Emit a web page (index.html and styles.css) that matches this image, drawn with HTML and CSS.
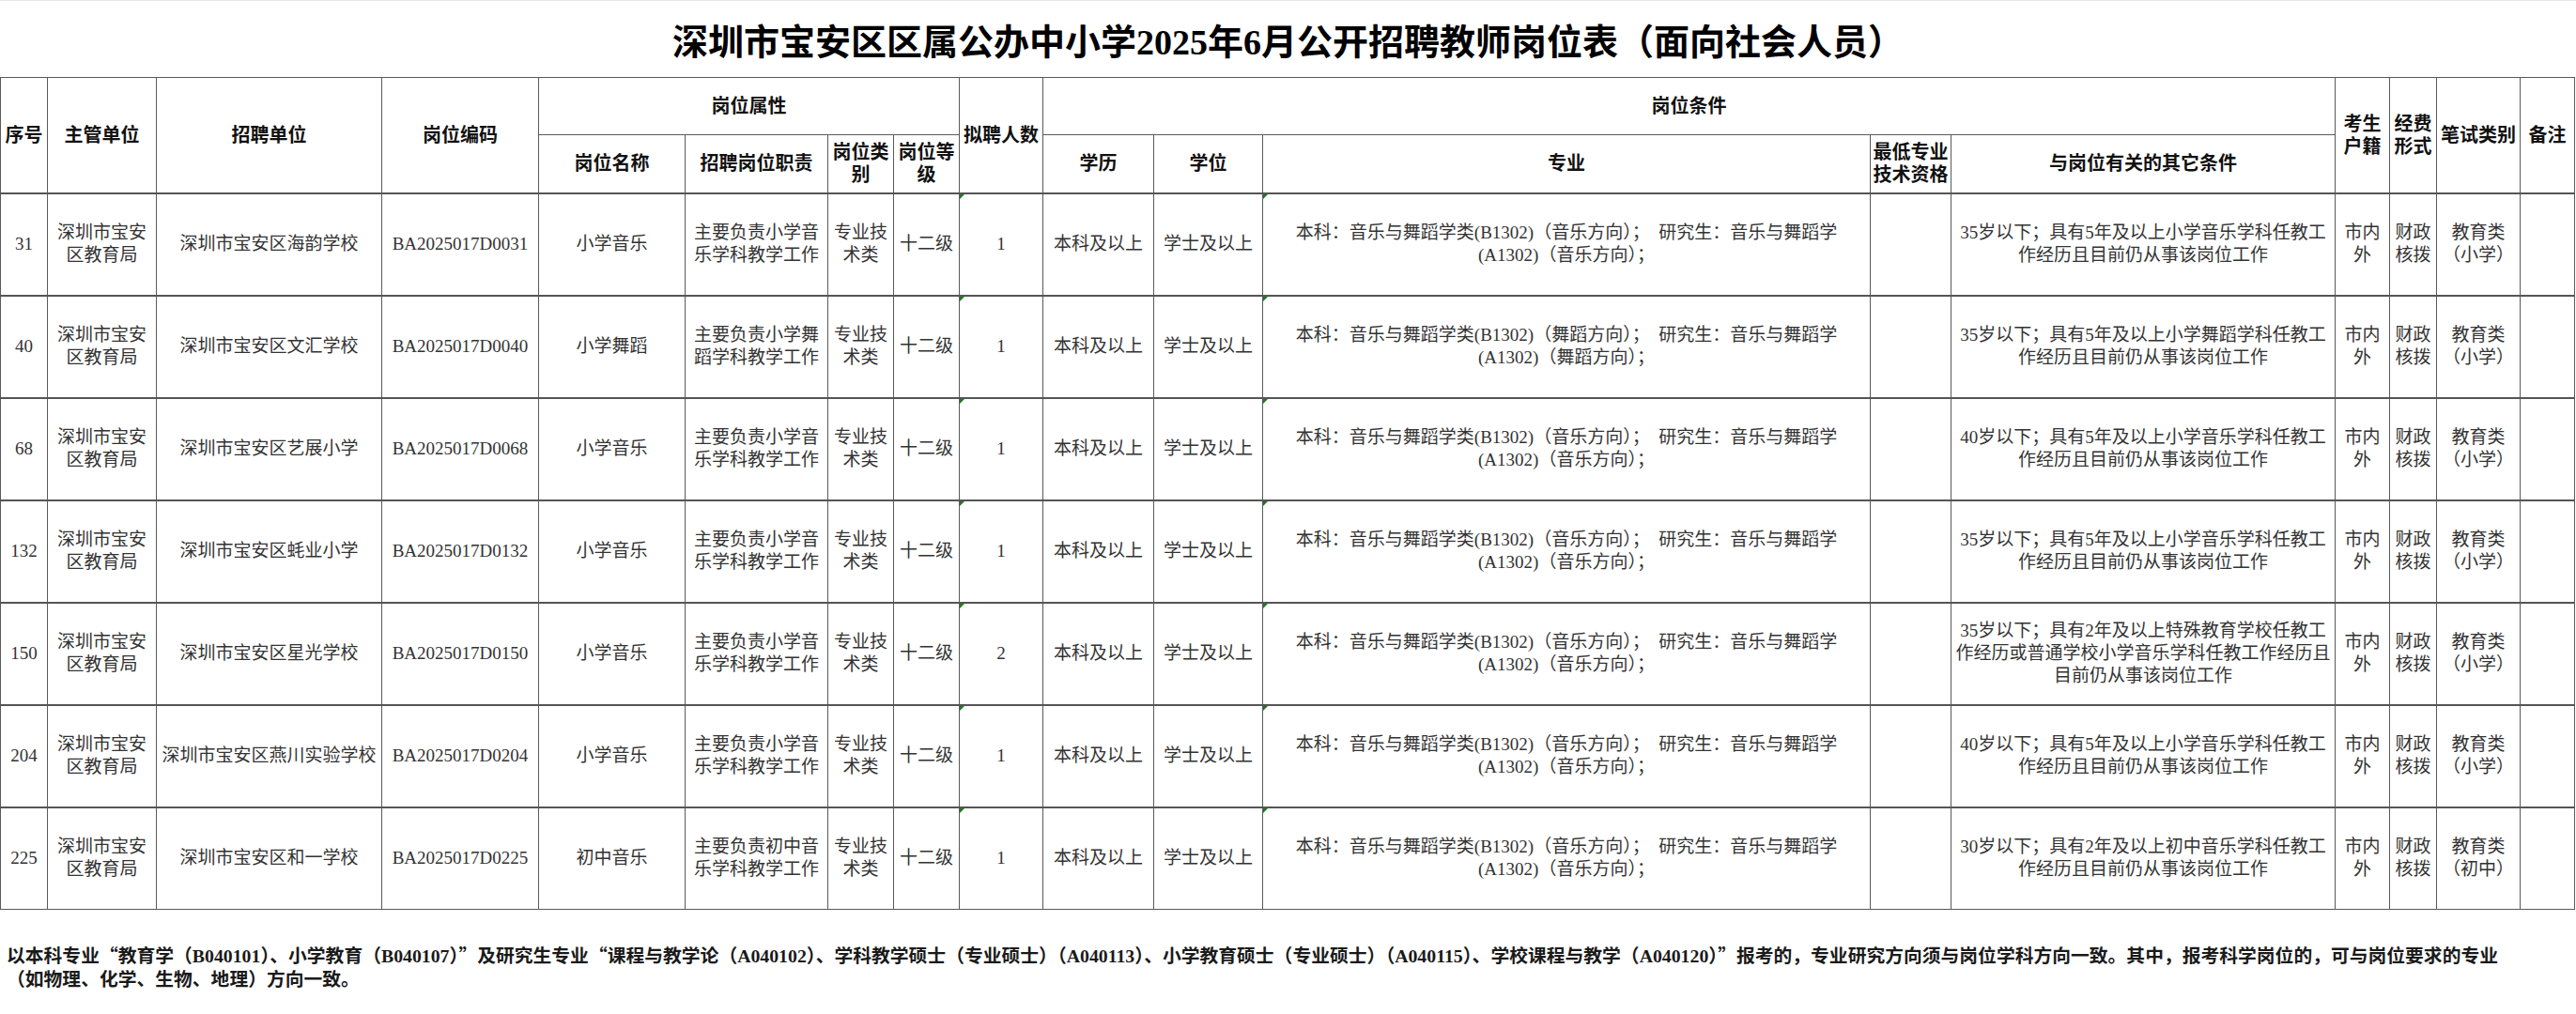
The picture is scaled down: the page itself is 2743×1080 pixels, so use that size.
FILE: index.html
```html
<!DOCTYPE html>
<html lang="zh-CN">
<head>
<meta charset="utf-8">
<title>深圳市宝安区区属公办中小学2025年6月公开招聘教师岗位表（面向社会人员）</title>
<link rel="stylesheet" href="styles.css">
</head>
<body>
<div class="page">
  <h1 class="title">深圳市宝安区区属公办中小学2025年6月公开招聘教师岗位表（面向社会人员）</h1>
  <table class="sheet">
    <colgroup>
      <col style="width:50px"><col style="width:116px"><col style="width:240px"><col style="width:167px">
      <col style="width:156px"><col style="width:152px"><col style="width:70px"><col style="width:70px">
      <col style="width:89px"><col style="width:118px"><col style="width:116px"><col style="width:647px">
      <col style="width:86px"><col style="width:409px"><col style="width:58px"><col style="width:50px">
      <col style="width:89px"><col style="width:58px">
    </colgroup>
    <thead>
      <tr class="h1">
        <th rowspan="2">序号</th>
        <th rowspan="2">主管单位</th>
        <th rowspan="2">招聘单位</th>
        <th rowspan="2">岗位编码</th>
        <th colspan="4">岗位属性</th>
        <th rowspan="2">拟聘人数</th>
        <th colspan="5">岗位条件</th>
        <th rowspan="2">考生<br>户籍</th>
        <th rowspan="2">经费<br>形式</th>
        <th rowspan="2">笔试类别</th>
        <th rowspan="2">备注</th>
      </tr>
      <tr class="h2">
        <th>岗位名称</th>
        <th>招聘岗位职责</th>
        <th>岗位类<br>别</th>
        <th>岗位等<br>级</th>
        <th>学历</th>
        <th>学位</th>
        <th>专业</th>
        <th class="tight">最低专业<br>技术资格</th>
        <th>与岗位有关的其它条件</th>
      </tr>
    </thead>
    <tbody>
      <tr class="row">
        <td>31</td><td>深圳市宝安<br>区教育局</td><td>深圳市宝安区海韵学校</td><td>BA2025017D0031</td>
        <td>小学音乐</td><td>主要负责小学音<br>乐学科教学工作</td><td>专业技<br>术类</td><td>十二级</td>
        <td class="flag">1</td><td>本科及以上</td><td>学士及以上</td>
        <td class="flag">本科：音乐与舞蹈学类(B1302)（音乐方向）；　研究生：音乐与舞蹈学<br>(A1302)（音乐方向）；</td>
        <td></td><td>35岁以下；具有5年及以上小学音乐学科任教工<br>作经历且目前仍从事该岗位工作</td>
        <td>市内<br>外</td><td>财政<br>核拨</td><td>教育类<br>（小学）</td><td></td>
      </tr>
      <tr class="row">
        <td>40</td><td>深圳市宝安<br>区教育局</td><td>深圳市宝安区文汇学校</td><td>BA2025017D0040</td>
        <td>小学舞蹈</td><td>主要负责小学舞<br>蹈学科教学工作</td><td>专业技<br>术类</td><td>十二级</td>
        <td class="flag">1</td><td>本科及以上</td><td>学士及以上</td>
        <td class="flag">本科：音乐与舞蹈学类(B1302)（舞蹈方向）；　研究生：音乐与舞蹈学<br>(A1302)（舞蹈方向）；</td>
        <td></td><td>35岁以下；具有5年及以上小学舞蹈学科任教工<br>作经历且目前仍从事该岗位工作</td>
        <td>市内<br>外</td><td>财政<br>核拨</td><td>教育类<br>（小学）</td><td></td>
      </tr>
      <tr class="row">
        <td>68</td><td>深圳市宝安<br>区教育局</td><td>深圳市宝安区艺展小学</td><td>BA2025017D0068</td>
        <td>小学音乐</td><td>主要负责小学音<br>乐学科教学工作</td><td>专业技<br>术类</td><td>十二级</td>
        <td class="flag">1</td><td>本科及以上</td><td>学士及以上</td>
        <td class="flag">本科：音乐与舞蹈学类(B1302)（音乐方向）；　研究生：音乐与舞蹈学<br>(A1302)（音乐方向）；</td>
        <td></td><td>40岁以下；具有5年及以上小学音乐学科任教工<br>作经历且目前仍从事该岗位工作</td>
        <td>市内<br>外</td><td>财政<br>核拨</td><td>教育类<br>（小学）</td><td></td>
      </tr>
      <tr class="row">
        <td>132</td><td>深圳市宝安<br>区教育局</td><td>深圳市宝安区蚝业小学</td><td>BA2025017D0132</td>
        <td>小学音乐</td><td>主要负责小学音<br>乐学科教学工作</td><td>专业技<br>术类</td><td>十二级</td>
        <td class="flag">1</td><td>本科及以上</td><td>学士及以上</td>
        <td class="flag">本科：音乐与舞蹈学类(B1302)（音乐方向）；　研究生：音乐与舞蹈学<br>(A1302)（音乐方向）；</td>
        <td></td><td>35岁以下；具有5年及以上小学音乐学科任教工<br>作经历且目前仍从事该岗位工作</td>
        <td>市内<br>外</td><td>财政<br>核拨</td><td>教育类<br>（小学）</td><td></td>
      </tr>
      <tr class="row">
        <td>150</td><td>深圳市宝安<br>区教育局</td><td>深圳市宝安区星光学校</td><td>BA2025017D0150</td>
        <td>小学音乐</td><td>主要负责小学音<br>乐学科教学工作</td><td>专业技<br>术类</td><td>十二级</td>
        <td class="flag">2</td><td>本科及以上</td><td>学士及以上</td>
        <td class="flag">本科：音乐与舞蹈学类(B1302)（音乐方向）；　研究生：音乐与舞蹈学<br>(A1302)（音乐方向）；</td>
        <td></td><td>35岁以下；具有2年及以上特殊教育学校任教工<br>作经历或普通学校小学音乐学科任教工作经历且<br>目前仍从事该岗位工作</td>
        <td>市内<br>外</td><td>财政<br>核拨</td><td>教育类<br>（小学）</td><td></td>
      </tr>
      <tr class="row">
        <td>204</td><td>深圳市宝安<br>区教育局</td><td class="nowrap">深圳市宝安区燕川实验学校</td><td>BA2025017D0204</td>
        <td>小学音乐</td><td>主要负责小学音<br>乐学科教学工作</td><td>专业技<br>术类</td><td>十二级</td>
        <td class="flag">1</td><td>本科及以上</td><td>学士及以上</td>
        <td class="flag">本科：音乐与舞蹈学类(B1302)（音乐方向）；　研究生：音乐与舞蹈学<br>(A1302)（音乐方向）；</td>
        <td></td><td>40岁以下；具有5年及以上小学音乐学科任教工<br>作经历且目前仍从事该岗位工作</td>
        <td>市内<br>外</td><td>财政<br>核拨</td><td>教育类<br>（小学）</td><td></td>
      </tr>
      <tr class="row">
        <td>225</td><td>深圳市宝安<br>区教育局</td><td>深圳市宝安区和一学校</td><td>BA2025017D0225</td>
        <td>初中音乐</td><td>主要负责初中音<br>乐学科教学工作</td><td>专业技<br>术类</td><td>十二级</td>
        <td class="flag">1</td><td>本科及以上</td><td>学士及以上</td>
        <td class="flag">本科：音乐与舞蹈学类(B1302)（音乐方向）；　研究生：音乐与舞蹈学<br>(A1302)（音乐方向）；</td>
        <td></td><td>30岁以下；具有2年及以上初中音乐学科任教工<br>作经历且目前仍从事该岗位工作</td>
        <td>市内<br>外</td><td>财政<br>核拨</td><td>教育类<br>（初中）</td><td></td>
      </tr>
    </tbody>
  </table>
  <p class="note">以本科专业<span class="q">“</span>教育学（B040101）、小学教育（B040107）<span class="q">”</span>及研究生专业<span class="q">“</span>课程与教学论（A040102）、学科教学硕士（专业硕士）（A040113）、小学教育硕士（专业硕士）（A040115）、学校课程与教学（A040120）<span class="q">”</span>报考的，专业研究方向须与岗位学科方向一致。其中，报考科学岗位的，可与岗位要求的专业<br>（如物理、化学、生物、地理）方向一致。</p>
</div>
</body>
</html>
```

FILE: styles.css
```css
html, body {
  margin: 0;
  padding: 0;
  background: #ffffff;
}

body {
  font-family: "Liberation Serif", "Noto Sans CJK SC", serif;
  color: #2a2a2a;
}

.page {
  width: 2743px;
  border-top: 1px solid #e6e6e6;
}

.title {
  margin: 0;
  height: 81px;
  display: flex;
  align-items: center;
  justify-content: center;
  font-size: 38px;
  font-weight: bold;
  color: #000;
  letter-spacing: 0;
}

.sheet {
  width: 2741px;
  border-collapse: collapse;
  table-layout: fixed;
}

.sheet th,
.sheet td {
  border: 1px solid #5a5a5a;
  text-align: center;
  vertical-align: middle;
  padding: 0 2px;
  line-height: 24px;
  overflow: hidden;
}

.sheet th {
  font-size: 20px;
  font-weight: bold;
  color: #111;
}

.sheet td {
  font-size: 19px;
  color: #333;
}

.sheet tbody tr {
  border-top: 2px solid #555;
}

.h1 {
  height: 61px;
}

.h2 {
  height: 62px;
}

.row {
  height: 109px;
}

.tight {
  padding: 0;
}

.nowrap {
  white-space: nowrap;
}

.flag {
  position: relative;
}

.flag::before {
  content: "";
  position: absolute;
  left: 0;
  top: 0;
  width: 0;
  height: 0;
  border-top: 5px solid #1e7a1e;
  border-right: 5px solid transparent;
}

.note {
  margin: 35px 0 0 0;
  padding-left: 7px;
  font-size: 19.8px;
  font-weight: bold;
  line-height: 25px;
  white-space: nowrap;
  color: #1a1a1a;
}

.q {
  font-family: "Noto Sans CJK SC", sans-serif;
}
```
